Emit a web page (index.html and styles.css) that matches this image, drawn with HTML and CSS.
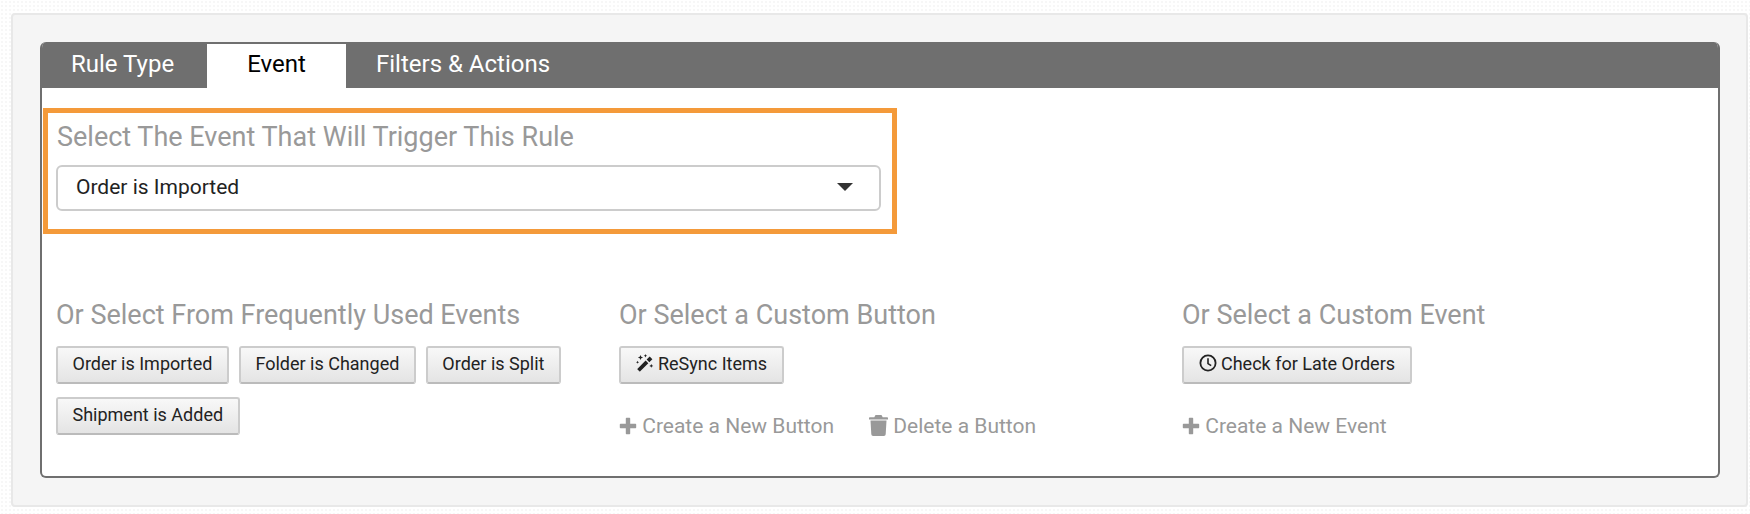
FILE: index.html
```html
<!DOCTYPE html>
<html lang="en">
<head>
  <meta charset="UTF-8">
  <title>Rule - Event</title>
  <link rel="stylesheet" href="styles.css">
</head>
<body>
  <div class="panel">
    <div class="rule-box">
      <div class="tabs">
        <div class="tab">Rule Type</div>
        <div class="tab active">Event</div>
        <div class="tab">Filters &amp; Actions</div>
      </div>
      <div class="rule-body">
        <div class="highlight">
          <h3>Select The Event That Will Trigger This Rule</h3>
          <div class="select">
            <span>Order is Imported</span>
            <span class="caret"></span>
          </div>
        </div>
        <div class="columns">
          <div class="column">
            <h3>Or Select From Frequently Used Events</h3>
            <div class="buttons">
              <button>Order is Imported</button>
              <button>Folder is Changed</button>
              <button>Order is Split</button>
              <button>Shipment is Added</button>
            </div>
          </div>
          <div class="column">
            <h3>Or Select a Custom Button</h3>
            <div class="buttons">
              <button>
                <svg class="icon" viewBox="0 0 20 20"><path d="M15.200 2.800l3 3-3.400 3.400-3-3zM10.700 7.300l3 3-9 9q-.5.4-1 0l-2-2q-.4-.5 0-1z" fill="#222"/><path d="M5 1l.9 2 2 .9-2 .9-.9 2-.9-2-2-.9 2-.9zM1.700 7.500l.5 1.200 1.200.5-1.200.5-.5 1.200-.5-1.200L0 9.200l1.200-.5zM17 11l.7 1.500 1.500.7-1.500.7-.7 1.500-.7-1.500-1.500-.7 1.500-.7zM10.500 0l.6 1.300 1.300.6-1.300.6-.6 1.300-.6-1.300-1.300-.6 1.300-.6z" fill="#222"/></svg>
                ReSync Items
              </button>
            </div>
            <div class="links">
              <a>
                <svg class="icon" viewBox="0 0 18 18"><path d="M6.800 1.500q0-.7.7-.7h3q.7 0 .7.700v5.300h5.300q.7 0 .7.700v3q0 .7-.7.7h-5.300v5.300q0 .7-.7.7h-3q-.7 0-.7-.7v-5.300H1.500q-.7 0-.7-.7v-3q0-.7.700-.7h5.300z" fill="#999"/></svg>
                Create a New Button
              </a>
              <a>
                <svg class="icon trash" viewBox="0 0 19 21"><path d="M6.500 0h6l1.200 2.200h4.500q.8 0 .8.800v1.400H0V3q0-.8.800-.8h4.500zM1.500 5.600h16l-.8 13.600q-.1 1.800-1.800 1.800H4.100q-1.700 0-1.800-1.800z" fill="#999"/></svg>
                Delete a Button
              </a>
            </div>
          </div>
          <div class="column">
            <h3>Or Select a Custom Event</h3>
            <div class="buttons">
              <button>
                <svg class="icon" viewBox="0 0 18 18"><circle cx="9" cy="9" r="7.600" fill="none" stroke="#222" stroke-width="1.800"/><path d="M9 4.300V9.600l3.200 2" fill="none" stroke="#222" stroke-width="1.600"/></svg>
                Check for Late Orders
              </button>
            </div>
            <div class="links">
              <a>
                <svg class="icon" viewBox="0 0 18 18"><path d="M6.800 1.500q0-.7.7-.7h3q.7 0 .7.700v5.300h5.300q.7 0 .7.700v3q0 .7-.7.700h-5.300v5.300q0 .7-.7.700h-3q-.7 0-.7-.7v-5.300H1.500q-.7 0-.7-.7v-3q0-.7.700-.7h5.300z" fill="#999"/></svg>
                Create a New Event
              </a>
            </div>
          </div>
        </div>
      </div>
    </div>
  </div>
</body>
</html>
```

FILE: styles.css
```css
* {
  box-sizing: border-box;
}

body {
  margin: 0;
  height: 514px;
  overflow: hidden;
  padding: 13px 2px 7px 11px;
  font-family: Roboto, "Liberation Sans", sans-serif;
  background-color: #fff;
  background-image: radial-gradient(#f7f7f7 1px, transparent 1px);
  background-size: 4px 4px;
}

.panel {
  height: 494px;
  padding: 27px 26px 27px 27px;
  background: #f5f5f5;
  border: 2px solid #e8e8e8;
  border-radius: 4px;
}

.rule-box {
  height: 100%;
  background: #fff;
  border: 2px solid #6f6f6f;
  border-top: 0;
  border-radius: 6px;
  overflow: hidden;
}

.tabs {
  display: flex;
  height: 46px;
  padding-top: 2px;
  background: #6f6f6f;
}

.tab {
  padding: 0 30px;
  font-size: 24px;
  line-height: 41px;
  white-space: nowrap;
  color: #fff;
}

.tab:first-child {
  width: 165px;
  padding-left: 29px;
}

.tab.active {
  width: 139px;
  padding: 0;
  text-align: center;
  background: #fff;
  color: #000;
}

.rule-body {
  padding: 20px 0 0 1px;
}

h3 {
  margin: 0;
  font-size: 27px;
  font-weight: 400;
  line-height: 30px;
  color: #999;
}

.highlight {
  width: 854px;
  height: 126px;
  padding: 9px 11px 0 8px;
  border: 5px solid #f49a3a;
}

.highlight h3 {
  margin-left: 1px;
}

.select {
  display: flex;
  align-items: center;
  justify-content: space-between;
  height: 46px;
  margin-top: 13px;
  padding: 0 26px 2px 18px;
  font-size: 21px;
  color: #222;
  border: 2px solid #ccc;
  border-radius: 6px;
}

.caret {
  border-top: 8px solid #333;
  border-left: 8px solid transparent;
  border-right: 8px solid transparent;
}

.columns {
  display: grid;
  grid-template-columns: 563px 563px 1fr;
  margin-top: 66px;
  padding-left: 13px;
}

.buttons {
  display: flex;
  flex-wrap: wrap;
  gap: 13px 10px;
  margin-top: 16px;
  max-width: 520px;
}

button {
  height: 38px;
  padding: 0 14.5px 3px;
  font-family: inherit;
  font-size: 18px;
  color: #222;
  background: linear-gradient(#f8f8f8, #e4e4e4);
  border: 2px solid #ccc;
  border-bottom-color: #bbb;
  border-radius: 3px;
}

.links {
  display: flex;
  gap: 35px;
  margin-top: 30px;
  font-size: 21px;
  color: #999;
}

.icon {
  width: 18px;
  height: 18px;
  vertical-align: -2px;
}

.icon.trash {
  width: 19px;
  height: 21px;
  vertical-align: -3px;
}
```
